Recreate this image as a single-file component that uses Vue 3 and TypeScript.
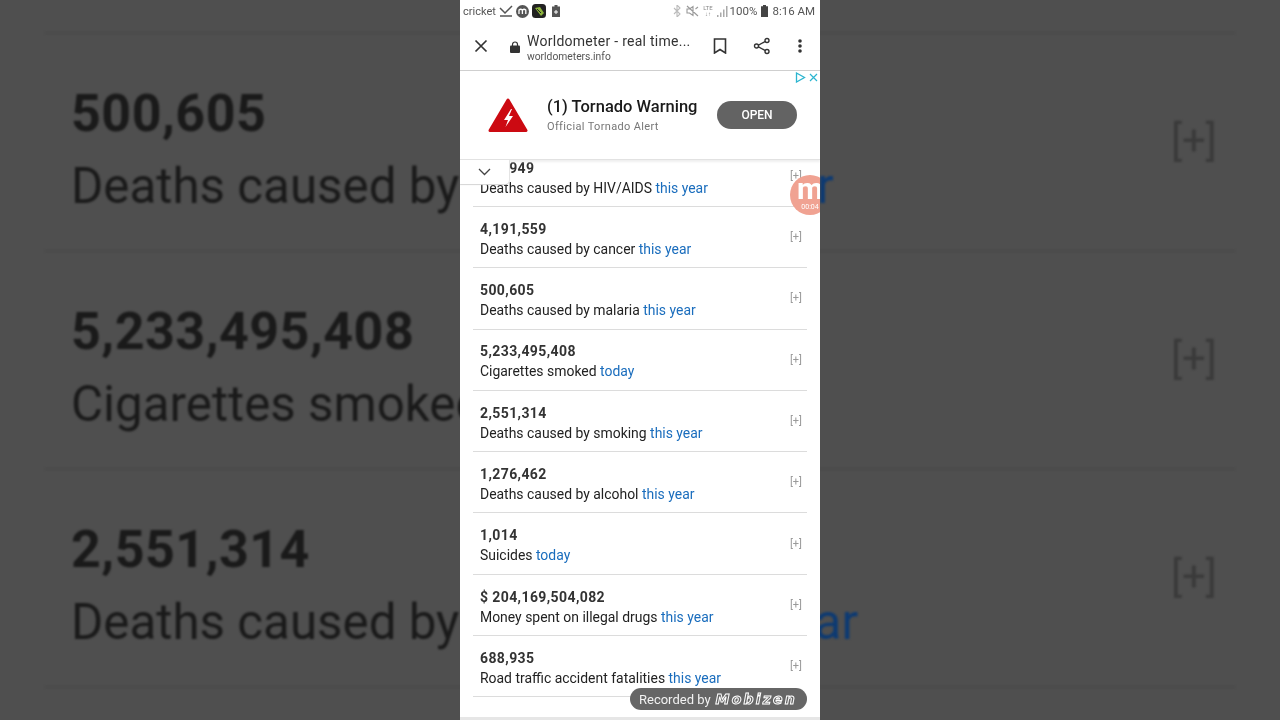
<template>
  <main class="stage">
    <!-- blown-up, darkened copy of the page behind the phone video -->
    <div class="backdrop" aria-hidden="true">
      <div class="backdrop__lead"></div>
      <div v-for="row in backdropRows" :key="row.value" class="backdrop__row">
        <div class="backdrop__text">
          <div class="backdrop__value">{{ row.value }}</div>
          <div class="backdrop__label">{{ row.label }} <span class="backdrop__period">{{ row.period }}</span></div>
        </div>
        <span class="backdrop__more">[+]</span>
      </div>
    </div>

    <section class="phone">
      <div class="status">
        <div class="status__side">
          <span>cricket</span>
          <svg width="14" height="12" viewBox="0 0 14 12"><path d="M1 3l5 5 7-7M1 11h12" fill="none" stroke="#555" stroke-width="1.5" /></svg>
          <svg width="13" height="13" viewBox="0 0 13 13"><circle cx="6.5" cy="6.5" r="6.5" fill="#555" /><path d="M3 9V5q1.700-1.500 3.400 0V9M6.400 5q1.700-1.500 3.400 0V9" fill="none" stroke="#fff" stroke-width="1.300" /></svg>
          <svg width="14" height="14" viewBox="0 0 14 14"><rect width="14" height="14" rx="3.500" fill="#222" /><path d="M3 4l5-1 4 6-3 3z" fill="#8cb33c" /><path d="M5 5l4 4" stroke="#222" /></svg>
          <svg class="status__gap" width="8" height="12" viewBox="0 0 8 12"><path d="M2.500 0h3v1.500H8V12H0V1.500h2.500z" fill="#555" /><path d="M4 5v4M2 7h4" stroke="#fff" /></svg>
        </div>
        <div class="status__side status__side--right">
          <svg class="status__bt" width="8" height="12" viewBox="0 0 8 12"><path d="M1 3l6 6-3 3V0l3 3-6 6" fill="none" stroke="#bbb" stroke-width="1.100" /></svg>
          <svg width="13" height="12" viewBox="0 0 13 12"><path d="M1 4h2.500L7 1.500v9L3.500 8H1zM1 1l11 10M9.500 4l2.500-2" fill="none" stroke="#999" stroke-width="1.100" /></svg>
          <span class="status__lte">LTE<br />↓↑</span>
          <svg width="11" height="11" viewBox="0 0 11 11"><path d="M0 11h1.500V9H0zM3 11h1.500V6.500H3zM6 11h1.500V3.500H6zM9 11h1.500V0H9z" fill="#aaa" /></svg>
          <span class="status__level">100%</span>
          <svg width="7" height="12" viewBox="0 0 7 12"><path d="M2 0h3v1.200h2V12H0V1.200h2z" fill="#444" /></svg>
          <span>8:16 AM</span>
        </div>
      </div>

      <header class="toolbar">
        <svg class="toolbar__close" width="14" height="14" viewBox="0 0 14 14"><path d="M1.500 1.500l11 11M12.500 1.500l-11 11" stroke="#333" stroke-width="1.700" /></svg>
        <svg class="toolbar__lock" width="10" height="12" viewBox="0 0 10 12"><path d="M2.500 5V3.500a2.500 2.500 0 0 1 5 0V5" fill="none" stroke="#333" stroke-width="1.200" /><rect y="4.500" width="10" height="7.500" rx="1" fill="#333" /></svg>
        <div class="toolbar__title">
          <div class="toolbar__name">Worldometer - real time...</div>
          <div class="toolbar__url">worldometers.info</div>
        </div>
        <svg class="toolbar__icon" width="14" height="16" viewBox="0 0 14 16"><path d="M1.500 1h11v14L7 11.500 1.500 15z" fill="none" stroke="#333" stroke-width="1.600" /></svg>
        <svg class="toolbar__icon toolbar__icon--share" width="18" height="18" viewBox="0 0 18 18"><path d="M14 3.500L4 9l10 5.500" fill="none" stroke="#333" stroke-width="1.400" /><circle cx="14" cy="3.500" r="2" fill="#fff" stroke="#333" stroke-width="1.400" /><circle cx="3.500" cy="9" r="2" fill="#fff" stroke="#333" stroke-width="1.400" /><circle cx="14" cy="14.500" r="2" fill="#fff" stroke="#333" stroke-width="1.400" /></svg>
        <svg class="toolbar__icon toolbar__icon--more" width="4" height="14" viewBox="0 0 4 14"><circle cx="2" cy="2" r="1.800" fill="#333" /><circle cx="2" cy="7" r="1.800" fill="#333" /><circle cx="2" cy="12" r="1.800" fill="#333" /></svg>
      </header>

      <aside class="ad">
        <div class="ad__choices">
          <svg width="11" height="11" viewBox="0 0 11 11"><path d="M1.500 1l8 4.500-8 4.500z" fill="none" stroke="#2bb5d0" stroke-width="1.300" /></svg>
          <svg width="9" height="9" viewBox="0 0 9 9"><path d="M1 1l7 7M8 1L1 8" stroke="#2bb5d0" stroke-width="1.200" /></svg>
        </div>
        <svg class="ad__logo" width="40" height="35" viewBox="0 0 40 35">
          <path d="M20 2L38 32.500H2z" fill="#cc0a12" stroke="#cc0a12" stroke-width="3" stroke-linejoin="round" />
          <path d="M23 11l-7 11h4l-2.500 7 7.500-11h-4l3-7z" fill="#fff" />
        </svg>
        <div class="ad__copy">
          <div class="ad__title">(1) Tornado Warning</div>
          <div class="ad__sub">Official Tornado Alert</div>
        </div>
        <span class="ad__open">OPEN</span>
      </aside>

      <div class="list">
        <div v-for="row in rows" :key="row.value" class="row">
          <div class="row__text">
            <div class="row__value">{{ row.value }}</div>
            <div class="row__label">{{ row.label }} <span class="row__period">{{ row.period }}</span></div>
          </div>
          <span class="row__more">[+]</span>
        </div>
      </div>

      <div class="collapse">
        <svg width="13" height="8" viewBox="0 0 13 8"><path d="M1 1l5.500 5.500L12 1" fill="none" stroke="#444" stroke-width="1.300" /></svg>
      </div>

      <div class="bubble">
        <span class="bubble__m">m</span>
        <span class="bubble__time">00:04</span>
      </div>

      <div class="recorded">
        <span>Recorded by</span>
        <span class="recorded__logo">Mobizen</span>
      </div>
    </section>
  </main>
</template>

<script setup lang="ts">
interface StatRow {
  value: string
  label: string
  period: string
}

const rows: StatRow[] = [
  { value: '574,949', label: 'Deaths caused by HIV/AIDS', period: 'this year' },
  { value: '4,191,559', label: 'Deaths caused by cancer', period: 'this year' },
  { value: '500,605', label: 'Deaths caused by malaria', period: 'this year' },
  { value: '5,233,495,408', label: 'Cigarettes smoked', period: 'today' },
  { value: '2,551,314', label: 'Deaths caused by smoking', period: 'this year' },
  { value: '1,276,462', label: 'Deaths caused by alcohol', period: 'this year' },
  { value: '1,014', label: 'Suicides', period: 'today' },
  { value: '$ 204,169,504,082', label: 'Money spent on illegal drugs', period: 'this year' },
  { value: '688,935', label: 'Road traffic accident fatalities', period: 'this year' },
]

const backdropRows = rows.slice(2, 5)
</script>

<style>
html,
body {
  margin: 0;
  background: #4f4f4f;
}
</style>

<style scoped>
.stage {
  position: relative;
  width: 1280px;
  height: 720px;
  overflow: hidden;
  background: #4f4f4f;
  font-family: Roboto, "Liberation Sans", sans-serif;
}

.backdrop {
  height: 720px;
  padding: 0 45px;
  box-sizing: border-box;
  filter: blur(1.2px);
}

.backdrop__lead {
  height: 34px;
  box-sizing: border-box;
  border-bottom: 2px solid #494949;
}

.backdrop__row {
  display: flex;
  justify-content: space-between;
  align-items: center;
  height: 218px;
  box-sizing: border-box;
  padding: 0 18px 0 26px;
  border-bottom: 2px solid #494949;
  color: #1a1a1a;
}

.backdrop__text {
  margin-top: 15px;
}

.backdrop__value {
  font-size: 52px;
  font-weight: 700;
  line-height: 72px;
  letter-spacing: 0.5px;
}

.backdrop__label {
  font-size: 49.300px;
  line-height: 72px;
  white-space: nowrap;
}

.backdrop__period {
  color: #0d3a72;
}

.backdrop__more {
  margin-bottom: 4px;
  font-size: 42px;
  color: #3a3a3a;
}

.phone {
  position: absolute;
  inset: 0 460px;
  overflow: hidden;
  background: #fff;
  filter: blur(0.35px);
  border-bottom: 3px solid #e6e6e6;
  box-sizing: border-box;
}

.status {
  display: flex;
  justify-content: space-between;
  align-items: center;
  height: 22px;
  padding: 0 5px 0 3px;
  font-size: 11px;
  color: #555;
}

.status__side {
  display: flex;
  align-items: center;
  gap: 3px;
}

.status__side--right {
  gap: 4px;
  font-size: 11.5px;
}

.status__gap {
  margin-left: 3px;
}

.status__bt {
  margin-right: 1px;
}

.status__level {
  margin-left: -2px;
}

.status__lte {
  font-size: 6px;
  line-height: 6px;
  text-align: center;
  color: #888;
}

.toolbar {
  display: flex;
  align-items: center;
  height: 48px;
  border-bottom: 1px solid #cfcfcf;
  box-shadow: 0 1px 1px #e4e4e4;
}

.toolbar__close {
  margin-left: 14px;
}

.toolbar__lock {
  margin-left: 22px;
  margin-top: 1px;
}

.toolbar__title {
  width: 170px;
  margin-left: 7px;
  margin-top: 3px;
}

.toolbar__name {
  font-size: 14px;
  line-height: 18px;
  letter-spacing: 0.26px;
  color: #333;
  white-space: nowrap;
}

.toolbar__url {
  font-size: 10.300px;
  line-height: 14px;
  color: #555;
}

.toolbar__icon {
  margin-left: 16px;
}

.toolbar__icon--share {
  margin-left: 26px;
}

.toolbar__icon--more {
  margin-left: 27px;
}

.ad {
  position: relative;
  z-index: 1;
  display: flex;
  align-items: center;
  height: 89px;
  box-sizing: border-box;
  background: #fff;
  border-bottom: 1px solid #e2e2e2;
  box-shadow: 0 2px 2px #efefef;
}

.ad__choices {
  position: absolute;
  top: 1px;
  right: 2px;
  display: flex;
  align-items: center;
  gap: 3px;
}

.ad__logo {
  margin-left: 28px;
}

.ad__copy {
  width: 170px;
  margin-left: 19px;
  margin-top: 1px;
}

.ad__title {
  font-size: 16.500px;
  font-weight: 500;
  line-height: 20px;
  color: #1a1a1a;
  white-space: nowrap;
}

.ad__sub {
  margin-top: 2px;
  font-size: 11px;
  line-height: 16px;
  letter-spacing: 0.35px;
  color: #777;
}

.ad__open {
  width: 80px;
  height: 28px;
  border-radius: 14px;
  background: #636363;
  color: #fff;
  font-size: 12px;
  font-weight: 500;
  line-height: 28px;
  text-align: center;
}

.list {
  margin: -14.300px 13px 0;
}

.row {
  display: flex;
  justify-content: space-between;
  align-items: center;
  height: 61.300px;
  box-sizing: border-box;
  padding: 2px 5px 0 7px;
  border-bottom: 1px solid #dcdcdc;
}

.row__text {
  margin-top: 2px;
}

.row__value {
  font-size: 14px;
  font-weight: 700;
  line-height: 20px;
  letter-spacing: 0.4px;
  color: #333;
}

.row__label {
  font-size: 13.950px;
  line-height: 20.500px;
  color: #222;
  white-space: nowrap;
}

.row__period {
  color: #1a6dbd;
}

.row__more {
  margin-bottom: 3px;
  font-size: 11px;
  color: #9a9a9a;
}

.collapse {
  position: absolute;
  top: 160px;
  left: 0;
  z-index: 2;
  display: flex;
  align-items: center;
  justify-content: center;
  width: 49px;
  height: 24px;
  background: #fff;
  border-radius: 0 0 4px 0;
  box-shadow: 0 1px 1px #d4d4d4, 1px 0 1px #e4e4e4;
}

.bubble {
  position: absolute;
  top: 175px;
  left: 330px;
  z-index: 3;
  width: 40px;
  height: 40px;
  border-radius: 50%;
  background: #f0a292;
  color: #fff;
  text-align: center;
}

.bubble__m {
  display: block;
  font-size: 30px;
  font-weight: 700;
  line-height: 28px;
}

.bubble__time {
  display: block;
  font-size: 7px;
  line-height: 8px;
}

.recorded {
  position: absolute;
  top: 688px;
  left: 170px;
  z-index: 3;
  display: flex;
  align-items: center;
  gap: 5px;
  width: 177px;
  height: 22px;
  box-sizing: border-box;
  padding-left: 9px;
  border-radius: 11px;
  background: #666;
  color: #f2f2f2;
  font-size: 13px;
  white-space: nowrap;
}

.recorded__logo {
  font-family: "DejaVu Sans", sans-serif;
  font-size: 14px;
  font-weight: 700;
  font-style: italic;
  letter-spacing: 2.200px;
  color: transparent;
  -webkit-text-stroke: 1px #fff;
}
</style>
